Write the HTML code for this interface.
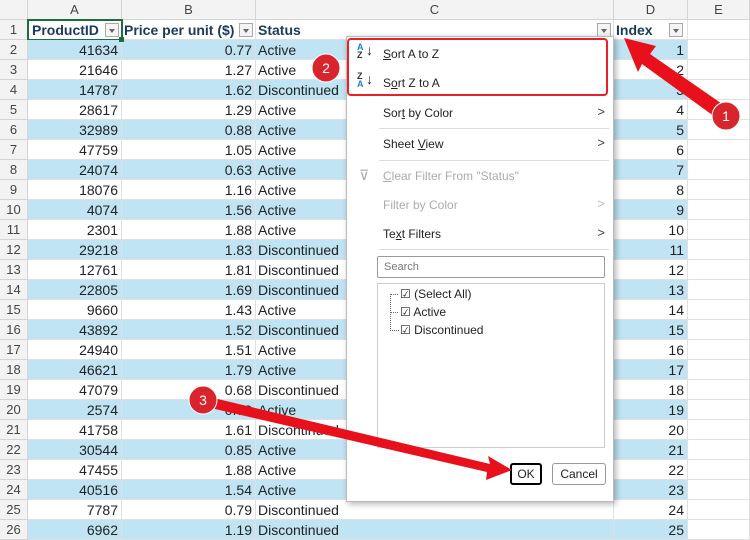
<!DOCTYPE html><html><head><style>
body{margin:0;width:750px;height:533px;overflow:hidden;background:#fff;font-family:"Liberation Sans",sans-serif;position:relative}
.c{position:absolute;height:20px;line-height:20px;font-size:14px;color:#222;box-sizing:border-box;border-right:1px solid #e0e0e0;border-bottom:1px solid #e0e0e0;white-space:nowrap;overflow:hidden}
.h{background:#f3f3f3;color:#444;text-align:center;font-size:13px;border-color:#d4d4d4}
.r{text-align:right;padding-right:3px}
.l{padding-left:2px}
.b{background:#c0e4f3}
.dd{position:absolute;width:14px;height:14px;border:1px solid #aaa;background:#f4f4f4;box-sizing:border-box}
.dd:after{content:"";position:absolute;left:3px;top:5px;border-left:3px solid transparent;border-right:3px solid transparent;border-top:4px solid #666}
.menu{position:absolute;left:346px;top:36px;width:266px;height:464px;background:#fff;border:1px solid #bbb;box-shadow:2px 2px 6px rgba(0,0,0,.3);font-size:12px;color:#222}
.mi{position:absolute;left:36px}
.sep{position:absolute;left:32px;right:4px;height:1px;background:#ddd}
.arr{position:absolute;right:8px;font-size:13px;color:#444}
</style></head><body>
<div id="g"></div>
<script>
var d=[[41634,.77,"Active"],[21646,1.27,"Active"],[14787,1.62,"Discontinued"],[28617,1.29,"Active"],[32989,.88,"Active"],[47759,1.05,"Active"],[24074,.63,"Active"],[18076,1.16,"Active"],[4074,1.56,"Active"],[2301,1.88,"Active"],[29218,1.83,"Discontinued"],[12761,1.81,"Discontinued"],[22805,1.69,"Discontinued"],[9660,1.43,"Active"],[43892,1.52,"Discontinued"],[24940,1.51,"Active"],[46621,1.79,"Active"],[47079,.68,"Discontinued"],[2574,.72,"Active"],[41758,1.61,"Discontinued"],[30544,.85,"Active"],[47455,1.88,"Active"],[40516,1.54,"Active"],[7787,.79,"Discontinued"],[6962,1.19,"Discontinued"]];
var cols=[[0,28],[28,94],[122,134],[256,358],[614,74],[688,62]];
var s="";function cell(x,y,w,cls,t){s+='<div class="c '+cls+'" style="left:'+x+'px;top:'+y+'px;width:'+w+'px">'+t+'</div>';}
var L=["","A","B","C","D","E"];
for(var i=0;i<6;i++)cell(cols[i][0],0,cols[i][1],"h",L[i]);
cell(0,20,28,"h","1");
cell(122,20,134,"l","<b style='color:#1a3a5a'>Price per unit ($)</b>");
cell(256,20,358,"l","<b style='color:#1a3a5a'>Status</b>");
cell(614,20,74,"l","<b style='color:#1a3a5a'>Index</b>");
cell(688,20,62,"","");
s+='<div class="c l" style="left:27px;top:19px;width:96px;height:22px;line-height:18px;font-weight:bold;color:#1a3a5a;border:2px solid #1e6e3c;padding-left:3px">ProductID</div>';
for(var r=0;r<25;r++){var y=40+r*20,b=r%2==0?" b":"";cell(0,y,28,"h",r+2);
cell(28,y,94,"r"+b,d[r][0]);cell(122,y,134,"r"+b,d[r][1].toFixed(2));cell(256,y,358,"l"+b,d[r][2]);cell(614,y,74,"r"+b,r+1);cell(688,y,62,"","");}
s+='<div class="dd" style="left:105px;top:23px"></div><div class="dd" style="left:239px;top:23px"></div><div class="dd" style="left:597px;top:23px"></div><div class="dd" style="left:669px;top:23px"></div>';
s+='<div style="position:absolute;left:119px;top:37px;width:5px;height:5px;background:#1e6e3c"></div>';
document.getElementById("g").innerHTML=s;
</script>
<div class="menu">
<div style="position:absolute;left:10px;top:6px;font-size:9px;line-height:8px;color:#1a7fd0;font-weight:bold">A<br><span style="color:#333">Z</span></div><div style="position:absolute;left:19px;top:5px;font-size:14px">↓</div>
<div class="mi" style="top:10px"><u>S</u>ort A to Z</div>
<div style="position:absolute;left:10px;top:35px;font-size:9px;line-height:8px;color:#333;font-weight:bold">Z<br><span style="color:#1a7fd0">A</span></div><div style="position:absolute;left:19px;top:34px;font-size:14px">↓</div>
<div class="mi" style="top:39px">S<u>o</u>rt Z to A</div>
<div class="mi" style="top:69px">Sor<u>t</u> by Color</div><div class="arr" style="top:67px">&gt;</div>
<div class="sep" style="top:91px"></div>
<div class="mi" style="top:100px">Sheet <u>V</u>iew</div><div class="arr" style="top:98px">&gt;</div>
<div class="sep" style="top:123px"></div>
<div style="position:absolute;left:12px;top:130px;color:#aaa;font-size:14px">⊽</div>
<div class="mi" style="top:132px;color:#aaa"><u>C</u>lear Filter From "Status"</div>
<div class="mi" style="top:161px;color:#aaa">Filter by Color</div><div class="arr" style="top:159px;color:#bbb">&gt;</div>
<div class="mi" style="top:190px">Te<u>x</u>t Filters</div><div class="arr" style="top:188px">&gt;</div>
<div class="sep" style="top:212px"></div>
<div style="position:absolute;left:30px;top:219px;width:228px;height:22px;border:1px solid #999;border-radius:2px;box-sizing:border-box;color:#777;font-size:11px;line-height:20px;padding-left:6px">Search</div>
<div style="position:absolute;left:30px;top:246px;width:228px;height:165px;border:1px solid #ccc;box-sizing:border-box">
<div style="position:absolute;left:12px;top:10px;width:8px;height:36px;border-left:1px dotted #666;border-bottom:1px dotted #666"></div>
<div style="position:absolute;left:12px;top:10px;width:8px;height:18px;border-bottom:1px dotted #666"></div>
<div style="position:absolute;left:12px;top:-8px;width:8px;height:18px;border-bottom:1px dotted #666"></div>
<div style="position:absolute;left:22px;top:4px;line-height:12px;font-size:12px">☑ (Select All)</div>
<div style="position:absolute;left:22px;top:22px;line-height:12px;font-size:12px">☑ Active</div>
<div style="position:absolute;left:22px;top:40px;line-height:12px;font-size:12px">☑ Discontinued</div>
</div>
<div style="position:absolute;left:163px;top:426px;width:32px;height:22px;border:2px solid #000;border-radius:3px;box-sizing:border-box;text-align:center;line-height:18px">OK</div>
<div style="position:absolute;left:205px;top:426px;width:54px;height:22px;border:1px solid #999;border-radius:3px;box-sizing:border-box;text-align:center;line-height:20px">Cancel</div>
</div>
<div style="position:absolute;left:347px;top:38px;width:261px;height:58px;border:2px solid #e8202a;border-radius:4px;box-sizing:border-box"></div>
<svg width="750" height="533" style="position:absolute;left:0;top:0">
<polygon points="624,38 656,46 650,54 728,108 722,122 642,64 638,72" fill="#e8101a"/>
<polygon points="512,470 488,456 490,464 205,396 202,406 487,472 486,480" fill="#e8101a"/>
<g font-family="Liberation Sans" font-size="14" fill="#fff" text-anchor="middle">
<circle cx="726" cy="116" r="14" fill="#d8242c" stroke="#fff" stroke-width="1"/><text x="726" y="121">1</text>
<circle cx="326" cy="68" r="14" fill="#d8242c" stroke="#fff" stroke-width="1"/><text x="326" y="73">2</text>
<circle cx="203" cy="400" r="14" fill="#d8242c" stroke="#fff" stroke-width="1"/><text x="203" y="405">3</text></g>
</svg>
</body></html>
